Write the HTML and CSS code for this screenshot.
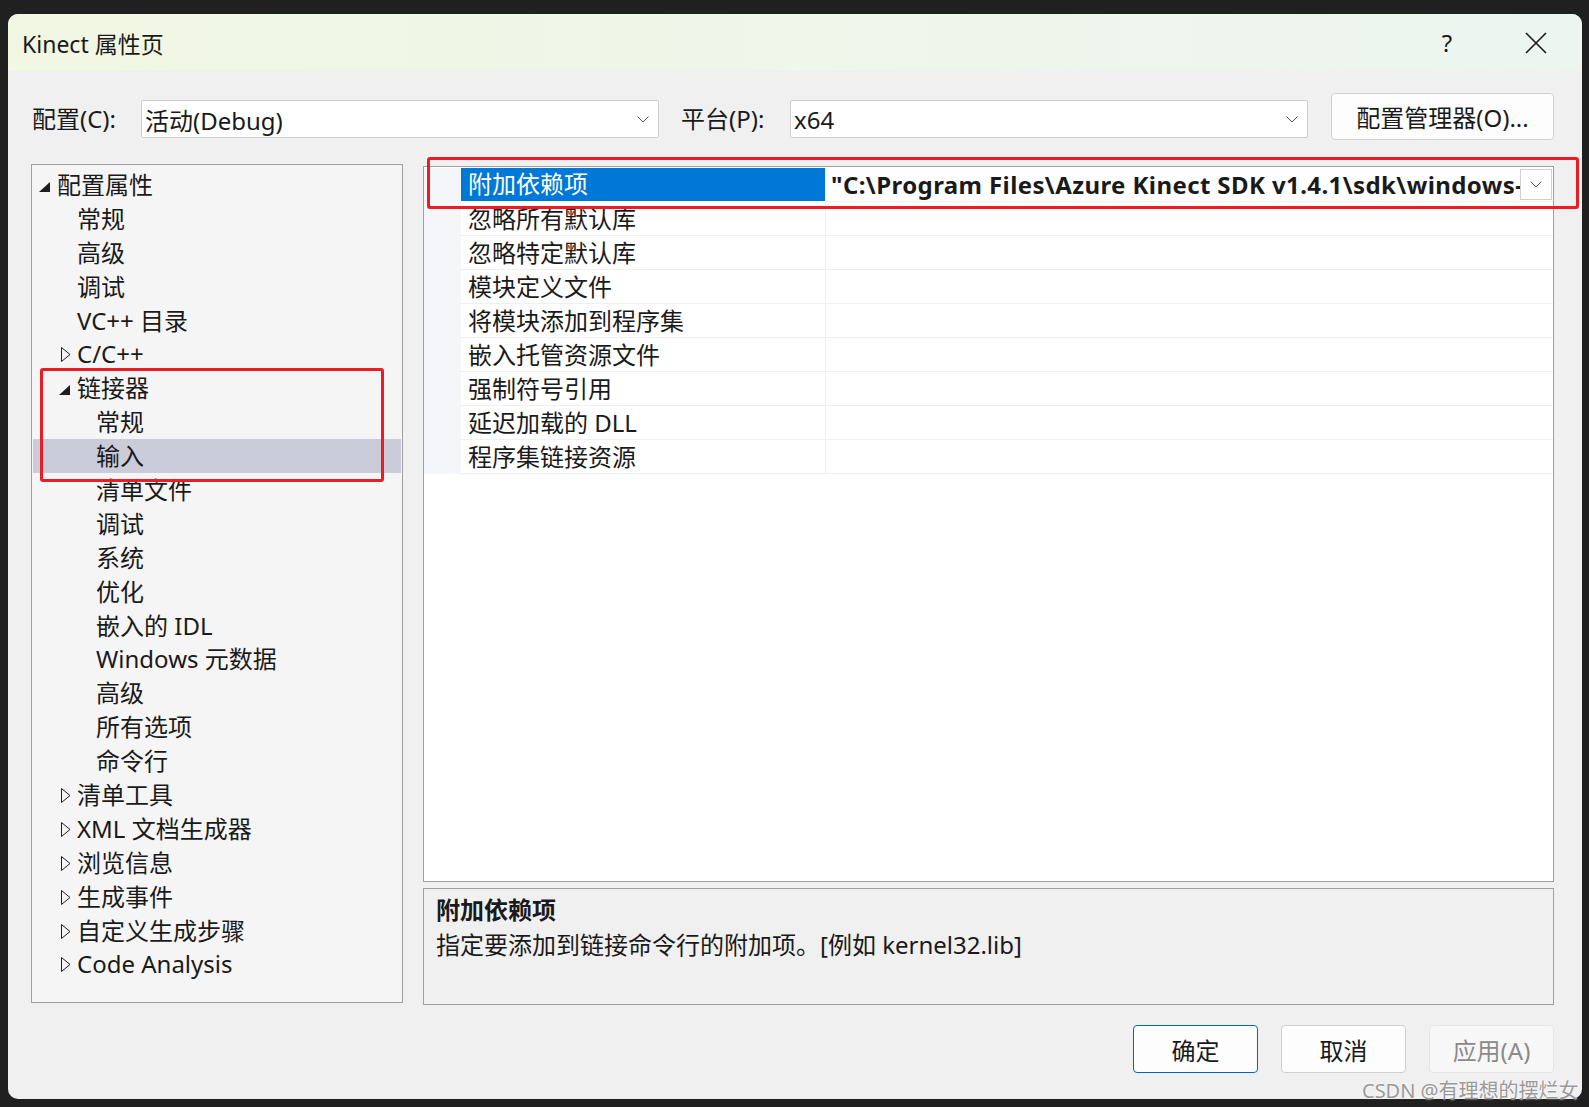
FILE: index.html
```html
<!DOCTYPE html>
<html lang="zh-CN">
<head>
<meta charset="utf-8">
<title>Kinect 属性页</title>
<link rel="stylesheet" href="styles.css">
</head>
<body>
<div class="window">
  <div class="titlebar">
    <span class="title">Kinect 属性页</span>
    <div class="tb-buttons">
      <span class="help">?</span>
      <svg class="close" width="22" height="22" viewBox="0 0 22 22"><path d="M1 1 L21 21 M21 1 L1 21" stroke="#1a1a1a" stroke-width="1.6" fill="none"/></svg>
    </div>
  </div>
  <div class="body">
    <div class="config-row">
      <span class="lbl">配置(C):</span>
      <div class="select"><span>活动(Debug)</span><svg class="chev" width="12" height="7" viewBox="0 0 12 7"><polyline points="0.5,0.5 6,6 11.5,0.5" stroke="#505050" stroke-width="1" fill="none"/></svg></div>
      <span class="lbl lbl2">平台(P):</span>
      <div class="select"><span>x64</span><svg class="chev" width="12" height="7" viewBox="0 0 12 7"><polyline points="0.5,0.5 6,6 11.5,0.5" stroke="#505050" stroke-width="1" fill="none"/></svg></div>
      <button class="btn mgr">配置管理器(O)...</button>
    </div>
    <div class="main">
      <div class="tree">
        <div class="trow l0"><svg class="tri" width="11" height="10" viewBox="0 0 11 10"><polygon points="11,0 11,10 0,10" fill="#1e1e1e"/></svg><span>配置属性</span></div>
        <div class="trow l1"><span>常规</span></div>
        <div class="trow l1"><span>高级</span></div>
        <div class="trow l1"><span>调试</span></div>
        <div class="trow l1"><span>VC++ 目录</span></div>
        <div class="trow l1"><svg class="tri col" width="10" height="15" viewBox="0 0 10 15"><polygon points="0.5,0.5 9,7.5 0.5,14.5" fill="none" stroke="#1e1e1e" stroke-width="1"/></svg><span>C/C++</span></div>
        <div class="trow l1"><svg class="tri" width="11" height="10" viewBox="0 0 11 10"><polygon points="11,0 11,10 0,10" fill="#1e1e1e"/></svg><span>链接器</span></div>
        <div class="trow l2"><span>常规</span></div>
        <div class="trow l2 sel"><span>输入</span></div>
        <div class="trow l2"><span>清单文件</span></div>
        <div class="trow l2"><span>调试</span></div>
        <div class="trow l2"><span>系统</span></div>
        <div class="trow l2"><span>优化</span></div>
        <div class="trow l2"><span>嵌入的 IDL</span></div>
        <div class="trow l2"><span>Windows 元数据</span></div>
        <div class="trow l2"><span>高级</span></div>
        <div class="trow l2"><span>所有选项</span></div>
        <div class="trow l2"><span>命令行</span></div>
        <div class="trow l1"><svg class="tri col" width="10" height="15" viewBox="0 0 10 15"><polygon points="0.5,0.5 9,7.5 0.5,14.5" fill="none" stroke="#1e1e1e" stroke-width="1"/></svg><span>清单工具</span></div>
        <div class="trow l1"><svg class="tri col" width="10" height="15" viewBox="0 0 10 15"><polygon points="0.5,0.5 9,7.5 0.5,14.5" fill="none" stroke="#1e1e1e" stroke-width="1"/></svg><span>XML 文档生成器</span></div>
        <div class="trow l1"><svg class="tri col" width="10" height="15" viewBox="0 0 10 15"><polygon points="0.5,0.5 9,7.5 0.5,14.5" fill="none" stroke="#1e1e1e" stroke-width="1"/></svg><span>浏览信息</span></div>
        <div class="trow l1"><svg class="tri col" width="10" height="15" viewBox="0 0 10 15"><polygon points="0.5,0.5 9,7.5 0.5,14.5" fill="none" stroke="#1e1e1e" stroke-width="1"/></svg><span>生成事件</span></div>
        <div class="trow l1"><svg class="tri col" width="10" height="15" viewBox="0 0 10 15"><polygon points="0.5,0.5 9,7.5 0.5,14.5" fill="none" stroke="#1e1e1e" stroke-width="1"/></svg><span>自定义生成步骤</span></div>
        <div class="trow l1"><svg class="tri col" width="10" height="15" viewBox="0 0 10 15"><polygon points="0.5,0.5 9,7.5 0.5,14.5" fill="none" stroke="#1e1e1e" stroke-width="1"/></svg><span>Code Analysis</span></div>
      </div>
      <div class="right">
        <div class="grid">
          <div class="grow first">
            <div class="gmargin"></div>
            <div class="gname selcell">附加依赖项</div>
            <div class="gval"><span class="valtext">"C:\Program Files\Azure Kinect SDK v1.4.1\sdk\windows-desktop\amd64\release\lib\k4a.lib";%(AdditionalDependencies)</span><span class="ddbtn"><svg width="12" height="7" viewBox="0 0 12 7"><polyline points="0.5,0.5 6,6 11.5,0.5" stroke="#505050" stroke-width="1" fill="none"/></svg></span></div>
          </div>
          <div class="grow"><div class="gmargin"></div><div class="gname">忽略所有默认库</div><div class="gval"></div></div>
          <div class="grow"><div class="gmargin"></div><div class="gname">忽略特定默认库</div><div class="gval"></div></div>
          <div class="grow"><div class="gmargin"></div><div class="gname">模块定义文件</div><div class="gval"></div></div>
          <div class="grow"><div class="gmargin"></div><div class="gname">将模块添加到程序集</div><div class="gval"></div></div>
          <div class="grow"><div class="gmargin"></div><div class="gname">嵌入托管资源文件</div><div class="gval"></div></div>
          <div class="grow"><div class="gmargin"></div><div class="gname">强制符号引用</div><div class="gval"></div></div>
          <div class="grow"><div class="gmargin"></div><div class="gname">延迟加载的 DLL</div><div class="gval"></div></div>
          <div class="grow"><div class="gmargin"></div><div class="gname">程序集链接资源</div><div class="gval"></div></div>
        </div>
        <div class="desc">
          <div class="desc-title">附加依赖项</div>
          <div class="desc-text">指定要添加到链接命令行的附加项。[例如 kernel32.lib]</div>
        </div>
      </div>
    </div>
    <div class="buttons">
      <button class="btn ok">确定</button>
      <button class="btn">取消</button>
      <button class="btn disabled">应用(A)</button>
    </div>
  </div>
  <div class="redbox rb-grid"></div>
  <div class="redbox rb-tree"></div>
</div>
<div class="watermark">CSDN @有理想的摆烂女</div>
</body>
</html>
```

FILE: styles.css
```css
* { box-sizing: border-box; }
html, body { margin: 0; padding: 0; }
body {
  width: 1589px;
  height: 1107px;
  background: #202020;
  font-family: "Noto Sans", "Noto Sans CJK SC", sans-serif;
  color: #1a1a1a;
  overflow: hidden;
  position: relative;
}
.window {
  position: relative;
  margin: 14px 0 0 8px;
  width: 1574px;
  height: 1085px;
  background: #f0f0f0;
  border-radius: 10px;
  overflow: hidden;
}
.titlebar {
  height: 57px;
  background: linear-gradient(90deg, #f1f7e2 0%, #eff6ea 50%, #ecf5f0 100%);
  display: flex;
  align-items: center;
  justify-content: space-between;
  padding-left: 14px;
}
.title { font-size: 23px; }
.tb-buttons { display: flex; align-items: center; height: 100%; }
.help { font-size: 24px; width: 90px; text-align: center; margin-right: 33px; }
.close { margin-right: 35px; }
.body { padding: 22px 28px 0 23px; }
.config-row {
  display: flex;
  align-items: flex-start;
  height: 48px;
  font-size: 24px;
}
.lbl { width: 110px; flex: none; padding-left: 1px; margin-top: 7px; line-height: 38px; }
.lbl2 { margin-left: 21px; }
.select {
  width: 518px;
  height: 38px;
  margin-top: 7px;
  flex: none;
  background: #fff;
  border: 1px solid #cdcdcd;
  border-radius: 2px;
  display: flex;
  align-items: center;
  justify-content: space-between;
  padding: 0 9px 0 3px;
}
.btn {
  font-family: inherit;
  font-size: 24px;
  color: #1a1a1a;
  background: #fdfdfd;
  border: 1px solid #d0d0d0;
  border-radius: 4px;
  height: 48px;
  width: 125px;
  padding: 0;
}
.mgr { margin-left: 23px; flex: 1; height: 47px; }
.main { display: flex; margin-top: 23px; }
.tree {
  width: 372px;
  height: 839px;
  flex: none;
  background: #f5f5f5;
  border: 1px solid #a0a0a0;
  padding: 3px 1px 0 1px;
  font-size: 24px;
}
.trow {
  height: 33.9px;
  line-height: 33.9px;
  display: flex;
  align-items: center;
  white-space: nowrap;
  position: relative;
}
.trow span { display: block; }
.trow.l0 { padding-left: 24px; }
.trow.l1 { padding-left: 44px; }
.trow.l2 { padding-left: 63px; }
.trow.sel { background: #cbccda; }
.tri { position: absolute; top: 13px; }
.l0 .tri { left: 6px; top: 14px; }
.l1 .tri { left: 26px; top: 14px; }
.l1 .tri.col { left: 28px; top: 10px; }
.right { flex: 1; min-width: 0; margin-left: 20px; display: flex; flex-direction: column; }
.grid {
  margin-top: 2px;
  height: 716px;
  background: #fff;
  border: 1px solid #a0a0a0;
  padding-top: 1px;
  font-size: 24px;
  overflow: hidden;
}
.grow { display: flex; height: 34px; }
.gmargin { width: 37px; flex: none; background: #f4f6fa; }
.gname {
  width: 365px;
  flex: none;
  padding-left: 7px;
  line-height: 33px;
  border-bottom: 1px solid #f0f0f0;
  border-right: 1px solid #f0f0f0;
  white-space: nowrap;
}
.gval {
  flex: 1;
  min-width: 0;
  border-bottom: 1px solid #f0f0f0;
  display: flex;
  align-items: center;
  position: relative;
}
.selcell { background: #0078d7; color: #fff; line-height: 32px; border-bottom-color: #fff; }
.valtext {
  font-weight: bold;
  letter-spacing: 0.4px;
  white-space: nowrap;
  overflow: hidden;
  flex: 1;
  min-width: 0;
  padding-left: 5px;
}
.ddbtn {
  width: 32px;
  height: 31px;
  flex: none;
  background: #fff;
  border: 1px solid #d0d0d0;
  display: flex;
  align-items: center;
  justify-content: center;
  margin-right: 1px;
}
.desc {
  margin-top: 6px;
  height: 117px;
  background: #f0f0f0;
  border: 1px solid #a0a0a0;
  padding: 4px 12px;
  font-size: 24px;
}
.desc-title { font-weight: bold; line-height: 34px; }
.desc-text { line-height: 36px; }
.buttons {
  display: flex;
  justify-content: flex-end;
  gap: 23px;
  margin-top: 20px;
}
.btn.ok { border: 1px solid #0067c0; }
.btn.disabled { background: #f7f7f7; border-color: #e6e6e6; color: #8a8a8a; }
.redbox {
  position: absolute;
  border: 3px solid #ec1c24;
  border-radius: 3px;
  pointer-events: none;
}
.rb-grid { left: 419px; top: 143px; width: 1152px; height: 52px; }
.rb-tree { left: 32px; top: 354px; width: 344px; height: 114px; }
.watermark {
  position: absolute;
  left: 1362px;
  top: 1075px;
  font-size: 20px;
  color: #9a9a9a;
  text-shadow: 0 0 2px #fff;
  white-space: nowrap;
}
```
